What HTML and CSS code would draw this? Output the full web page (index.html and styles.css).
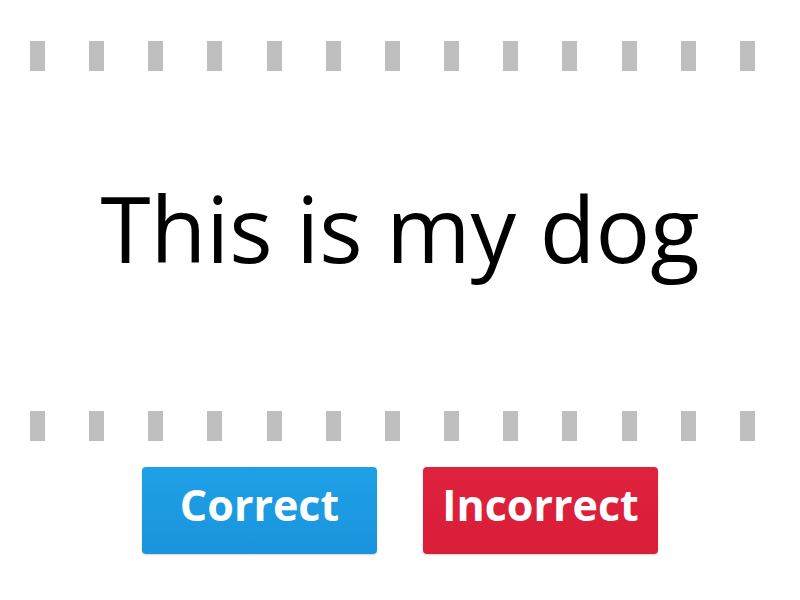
FILE: index.html
```html
<!DOCTYPE html>
<html>
<head>
<meta charset="utf-8">
<link rel="stylesheet" href="styles.css">
</head>
<body>
<div class="page">
  <div class="dashes">
    <span></span><span></span><span></span><span></span><span></span><span></span><span></span><span></span><span></span><span></span><span></span><span></span><span></span>
  </div>
  <div class="card">
    <div class="phrase">This is my dog</div>
  </div>
  <div class="dashes">
    <span></span><span></span><span></span><span></span><span></span><span></span><span></span><span></span><span></span><span></span><span></span><span></span><span></span>
  </div>
  <div class="buttons">
    <button class="btn btn-correct">Correct</button>
    <button class="btn btn-incorrect">Incorrect</button>
  </div>
</div>
</body>
</html>
```

FILE: styles.css
```css
html, body {
  margin: 0;
  padding: 0;
  background: #ffffff;
}

.page {
  width: 800px;
  height: 600px;
  display: flex;
  flex-direction: column;
  padding-top: 41px;
  box-sizing: border-box;
  font-family: "Open Sans", "Noto Sans", sans-serif;
}

.dashes {
  display: flex;
  justify-content: space-between;
  width: 725px;
  margin-left: 30px;
  height: 30px;
}

.dashes span {
  width: 15px;
  height: 30px;
  background: #bfbfbf;
}

.card {
  height: 340px;
  box-sizing: border-box;
  padding-top: 112px;
  text-align: center;
}

.phrase {
  font-size: 91px;
  line-height: 91px;
  color: #000000;
  font-weight: 400;
}

.buttons {
  display: flex;
  justify-content: center;
  gap: 46px;
  margin-top: 26px;
}

.btn {
  width: 235px;
  height: 87px;
  border: none;
  border-radius: 4px;
  color: #ffffff;
  font-family: "Open Sans", "Noto Sans", sans-serif;
  font-weight: 700;
  font-size: 43px;
  padding: 0 0 12px 0;
  box-shadow: 0 1px 2px rgba(0, 0, 0, 0.18);
}

.btn-correct {
  background: linear-gradient(#1fa0e6, #1a94dc);
}

.btn-incorrect {
  background: linear-gradient(#df213d, #d91e38);
}
```
